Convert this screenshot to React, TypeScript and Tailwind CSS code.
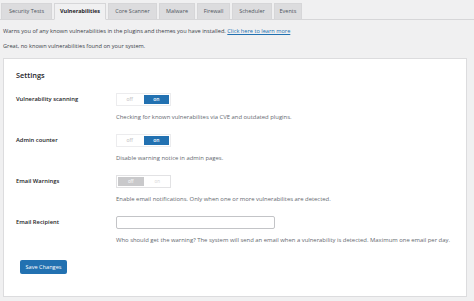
import React from 'react';

const tabs = [
  { name: 'Security Tests', w: 'w-[51px]' },
  { name: 'Vulnerabilities', w: 'w-[52px]' },
  { name: 'Core Scanner', w: 'w-[49px]' },
  { name: 'Malware', w: 'w-[36px]' },
  { name: 'Firewall', w: 'w-[33px]' },
  { name: 'Scheduler', w: 'w-[40px]' },
  { name: 'Events', w: 'w-[28px]' },
];

function Toggle({ disabled = false }: { disabled?: boolean }) {
  if (disabled) {
    return (
      <div className="flex h-[13px] w-[55px] border border-[#e2e2e4] bg-white">
        <div className="m-[1px] flex flex-1 items-center justify-center bg-[#c9c9cb] text-[4.5px] text-white">off</div>
        <div className="flex flex-1 items-center justify-center text-[4.5px] text-[#d5d5d7]">on</div>
      </div>
    );
  }
  return (
    <div className="flex h-[13px] w-[55px] border border-[#ececee] bg-white">
      <div className="flex flex-1 items-center justify-center text-[5px] text-[#b9b9bb]">off</div>
      <div className="m-[1px] flex flex-1 items-center justify-center bg-[#2271b1] text-[5px] font-semibold text-white">on</div>
    </div>
  );
}

function Row({ label, children, desc }: { label: string; children: React.ReactNode; desc: string }) {
  return (
    <div className="flex">
      <div className="flex h-[13px] w-[100px] shrink-0 items-center text-[5.8px] font-semibold text-[#1d2327]">{label}</div>
      <div className="flex flex-col">
        {children}
        <p className="mt-[7px] whitespace-nowrap text-[5.9px] leading-[8px] text-[#646970]">{desc}</p>
      </div>
    </div>
  );
}

export default function App() {
  return (
    <div
      className="h-[301px] w-[474px] overflow-hidden bg-[#f0f0f1] text-[#3c434a]"
      style={{ fontFamily: '"Open Sans", "Noto Sans", sans-serif' }}
    >
      <div className="flex h-[20px] items-end gap-[2px] border-b border-[#d6d6d8] pl-[1px] pt-[4px]">
        {tabs.map((t) => {
          const active = t.name === 'Vulnerabilities';
          return (
            <div
              key={t.name}
              className={`${t.w} -mb-px flex h-[17px] items-center justify-center border text-[5.5px] ${
                active
                  ? 'border-[#d6d6d8] border-b-[#f0f0f1] bg-[#f0f0f1] font-bold text-[#1d2327]'
                  : 'border-[#d6d6d8] bg-[#dcdcde] text-[#50575e]'
              }`}
            >
              {t.name}
            </div>
          );
        })}
      </div>

      <div className="pl-[3px]">
        <p className="mt-[8px] text-[5.65px] leading-[7px] text-[#3c434a]">
          Warns you of any known vulnerabilities in the plugins and themes you have installed.{' '}
          <span className="text-[#2271b1] underline">Click here to learn more</span>
        </p>
        <p className="mt-[8px] text-[5.65px] leading-[7px] text-[#3c434a]">Great, no known vulnerabilities found on your system.</p>
      </div>

      <div className="ml-[3px] mt-[8px] h-[239px] w-[464px] border border-[#dcdcde] bg-white pl-[12px]">
        <h2 className="mt-[11px] text-[7.4px] font-semibold text-[#1d2327]">Settings</h2>

        <div className="mt-[12px] flex flex-col gap-[13px]">
          <Row label="Vulnerability scanning" desc="Checking for known vulnerabilites via CVE and outdated plugins.">
            <Toggle />
          </Row>
          <Row label="Admin counter" desc="Disable warning notice in admin pages.">
            <Toggle />
          </Row>
          <Row label="Email Warnings" desc="Enable email notifications. Only when one or more vulnerabilites are detected.">
            <Toggle disabled />
          </Row>
          <Row
            label="Email Recipient"
            desc="Who should get the warning? The system will send an email when a vulnerability is detected. Maximum one email per day."
          >
            <div className="h-[13px] w-[159px] rounded-[2px] border border-[#c3c4c7] bg-white" />
          </Row>
        </div>

        <button className="ml-[4px] mt-[16px] h-[14px] w-[47px] rounded-[2px] bg-[#2271b1] text-[5.6px] text-white">
          Save Changes
        </button>
      </div>
    </div>
  );
}
